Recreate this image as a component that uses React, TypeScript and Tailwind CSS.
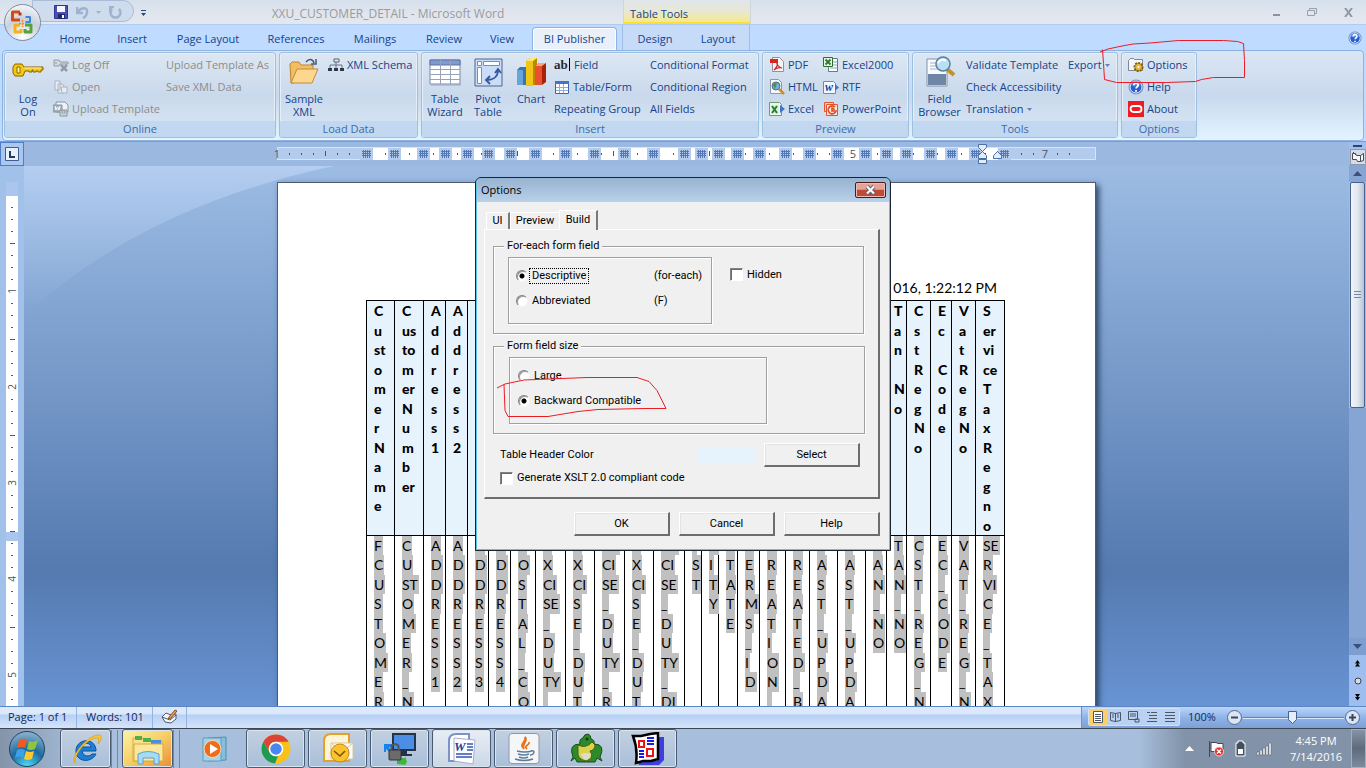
import type { ReactNode } from "react";

const tabs = [
  { name: "Home", width: "w-[58px]" },
  { name: "Insert", width: "w-14" },
  { name: "Page Layout", width: "w-24" },
  { name: "References", width: "w-20" },
  { name: "Mailings", width: "w-[78px]" },
  { name: "Review", width: "w-[60px]" },
  { name: "View", width: "w-14" },
];

// One entry per table column: header lines, then the selected form field lines.
const columns = [
  { width: 28, head: "C u st o m e r N a m e", body: "F C U S T O M E R" },
  { width: 29, head: "C us to m er N u m b er", body: "C U ST O M E R _ N" },
  { width: 22, head: "A d d r e s s 1", body: "A D D R E S S 1" },
  { width: 22, head: "A d d r e s s 2", body: "A D D R E S S 2" },
  { width: 21, head: "", body: "A D D R E S S 3" },
  { width: 22, head: "", body: "A D D R E S S 4" },
  { width: 25, head: "", body: "P O S T A L _ C O" },
  { width: 30, head: "", body: "E X CI SE _ D U TY ~" },
  { width: 29, head: "", body: "E X CI S E _ D U T" },
  { width: 30, head: "", body: "EX CI SE _ D U TY _ R" },
  { width: 29, head: "", body: "E X CI S E _ D U T" },
  { width: 31, head: "", body: "EX CI SE _ D U TY _ DI" },
  { width: 17, head: "", body: "~ S T" },
  { width: 17, head: "", body: "C I T Y" },
  { width: 19, head: "", body: "S T A T E" },
  { width: 22, head: "", body: "T E R M S _ I D" },
  { width: 26, head: "", body: "C R E A T I O N ~" },
  { width: 24, head: "", body: "C R E A T E D _ B" },
  { width: 28, head: "", body: "L A S T _ U P D A" },
  { width: 28, head: "", body: "L A S T _ U P D A" },
  { width: 21, head: "", body: "P A N _ N O" },
  { width: 20, head: "T a n ~ N o", body: "T A N _ N O" },
  { width: 24, head: "C s t R e g N o", body: "C S T _ R E G _ N" },
  { width: 21, head: "E c ~ C o d e", body: "E C _ C O D E" },
  { width: 24, head: "V a t R e g N o", body: "V A T _ R E G _ N" },
  { width: 29, head: "S er vi ce T a x R e g n o", body: "SE R VI C E _ T A X" },
];

const edges = columns.reduce((list, column) => [...list, list[list.length - 1] + column.width], [89]);

function lines(text: string) {
  return text ? text.split(" ").map((part) => (part === "~" ? "\u00a0" : part)) : [];
}

function HelpIcon({ size = 16 }: { size?: number }) {
  return (
    <svg width={size} height={size} viewBox="0 0 16 16">
      <circle cx="8" cy="8" r="7" fill="#2460cf" stroke="#7d93bb" />
      <circle cx="8" cy="8" r="6" fill="none" stroke="#e6f0ff" />
      <path d="M3 6a5 4 0 0 1 10 0q-5 3-10 0" fill="#6ea2f2" opacity=".6" />
      <path d="M5.8 6.3c.2-3 4.600-2.700 4.400 0 0 1.500-2.100 1.500-2.100 3.200M8 11v1.700" fill="none" stroke="#fff" strokeWidth="1.800" />
    </svg>
  );
}

function KeyIcon() {
  return (
    <svg width="32" height="32" viewBox="0 0 32 32">
      <path d="M3 8h7l2 3h19v3h-2v2h-3v-1h-2v1h-3v-2h-1v2h-3v-1h-4l-2 5H3l-2-3v-6z" fill="#f7c80c" stroke="#8a6400" />
      <path d="M5 11h3v6H5z" fill="#fff7c0" stroke="#8a6400" />
      <path d="M12 12h17" stroke="#fff2a0" />
    </svg>
  );
}

function FolderIcon() {
  return (
    <svg width="32" height="32" viewBox="0 0 32 32">
      <path d="M2 8l2-2h7l2 3h12v4L6 27H3z" fill="#f3bd62" stroke="#bf8534" />
      <path d="M9 13h21l-6 14H3z" fill="#fcd78d" stroke="#c38b3b" />
      <path d="M18 6c3-4 7-3 8 1M28 3v5h-5" fill="none" stroke="#475a72" strokeWidth="1.500" />
    </svg>
  );
}

function TableIcon() {
  return (
    <svg width="32" height="32" viewBox="0 0 32 32">
      <path d="M1 4h30v24H1z" fill="#fff" stroke="#7886a5" />
      <path d="M1 4h30v5H1z" fill="#7f9ad0" stroke="#5c74ab" />
      <path d="M1 13.500h30M1 18.500h30M1 23.500h30M11.500 4v24M21.500 4v24" stroke="#98a3ba" />
      <path d="M2 29h30" stroke="#9ba9c2" />
    </svg>
  );
}

function PivotIcon() {
  return (
    <svg width="32" height="32" viewBox="0 0 32 32">
      <path d="M3 3h27v27H3z" fill="#c9dcf8" stroke="#51658f" />
      <path d="M5.500 5.500h4v4h-4zM11.500 5.500h16v4h-16zM5.500 11.500h4v16h-4z" fill="#fff" stroke="#7b8dad" />
      <path d="M15 24c6 0 11-3 11-10M23 17l3-4 3 4M18 20l-4 4 4 4" fill="none" stroke="#38589c" strokeWidth="1.800" />
    </svg>
  );
}

function ChartIcon() {
  return (
    <svg width="32" height="32" viewBox="0 0 32 32">
      <path d="M2 14l3-3h7v18H2z" fill="#3576b5" />
      <path d="M2 14h6v15H2z" fill="#68a4d8" />
      <path d="M11 5l4-3h7v27H11z" fill="#b98a00" />
      <path d="M11 5h7v25h-7z" fill="#f2c413" />
      <path d="M11 5l4-3h7l-4 3z" fill="#ffe870" />
      <path d="M20 10l4-3h7v19l-4 3h-7z" fill="#a82205" />
      <path d="M20 10h7v19h-7z" fill="#ea5030" />
      <path d="M20 10l4-3h7l-4 3z" fill="#ffa182" />
    </svg>
  );
}

function BrowserIcon() {
  return (
    <svg width="32" height="32" viewBox="0 0 32 32">
      <path d="M3 3h20v27H3z" fill="#f8fafd" stroke="#8290a6" />
      <path d="M4 18h18v11H4z" fill="#6f87a6" />
      <path d="M6 7h7M6 10h6M6 13h7" stroke="#a5b2c4" />
      <path d="M23 13l7 6" stroke="#c79022" strokeWidth="4" />
      <circle cx="19" cy="8" r="7" fill="#b8e0f4" stroke="#5c7e9e" strokeWidth="1.500" />
      <path d="M14 7c2-4 6-4 8-2" fill="none" stroke="#fff" strokeWidth="2" />
    </svg>
  );
}

function LogOffIcon() {
  return (
    <svg width="16" height="16" viewBox="0 0 16 16" fill="none" stroke="#929aa5">
      <path d="M1 3h5l1 2h8v2H7L6 9H1zM3 5v2" fill="#d5dae1" />
      <path d="M8 8l6 6M14 8l-6 6" strokeWidth="2.500" />
    </svg>
  );
}

function OpenIcon() {
  return (
    <svg width="16" height="16" viewBox="0 0 16 16" fill="#e8edf4" stroke="#a8b2c0">
      <path d="M2 2h5v9H2zM5 5h4l2 2v7H5z" />
      <path d="M8 8h6v6H9z" />
    </svg>
  );
}

function UploadIcon() {
  return (
    <svg width="16" height="16" viewBox="0 0 16 16" stroke="#8b95a2">
      <path d="M3 1h9l3 3v7H3z" fill="#eef1f6" />
      <path d="M0 4h9v7H0z" fill="#a7b0bd" />
      <path d="M2 5l1 4 1.500-3L6 9l1-4" fill="none" stroke="#fff" />
      <path d="M7 9h7v6H7z" fill="#cdd3db" />
      <path d="M9 10h3v2H9z" fill="#fff" />
    </svg>
  );
}

function SchemaIcon() {
  return (
    <svg width="16" height="16" viewBox="0 0 16 16">
      <path d="M8 5v3M2 11V8h12v3M8 8v3" fill="none" stroke="#6b7686" />
      <path d="M6 2h5v3H6z" fill="#e7ebf2" stroke="#59616e" />
      <path d="M0 11h4v3H0zM6 11h4v3H6zM12 11h4v3h-4z" fill="#2f3947" />
    </svg>
  );
}

function FieldIcon() {
  return (
    <svg width="17" height="16" viewBox="0 0 17 16">
      <text x="0" y="12" fontFamily="Liberation Serif, serif" fontWeight="bold" fontSize="13" fill="#2a2a2a">ab</text>
      <path d="M15.500 1v13" stroke="#000" />
    </svg>
  );
}

function SmallTableIcon() {
  return (
    <svg width="16" height="16" viewBox="0 0 16 16">
      <path d="M1.500 2.500h13v12h-13z" fill="#fff" stroke="#3a66b5" />
      <path d="M1 2h14v3H1z" fill="#3f73cc" />
      <path d="M2 8.500h12M2 11.500h12M5.500 5v9M9.500 5v9" stroke="#94abd6" />
    </svg>
  );
}

function PdfIcon() {
  return (
    <svg width="16" height="16" viewBox="0 0 16 16">
      <path d="M3.500.500h7l4 4v10h-11z" fill="#f5f5f7" stroke="#8f9299" />
      <path d="M1 2h8v4H1z" fill="#d8271c" />
      <path d="M5 13c3-3 4-6 3-7-1 1 3 5 5 5-2-1-6 0-8 2" fill="none" stroke="#cf2a1f" strokeWidth="1.200" />
    </svg>
  );
}

function HtmlIcon() {
  return (
    <svg width="16" height="16" viewBox="0 0 16 16">
      <path d="M1.500.500h8l3 3v11h-11z" fill="#f7f9fc" stroke="#8c97a8" />
      <circle cx="7" cy="7" r="4" fill="#6fb0df" stroke="#5c6c80" />
      <path d="M4 6q2-3 4-2l-1 3-1 3z" fill="#3d9a43" />
      <path d="M10 10l5 5" stroke="#d08a2b" strokeWidth="2.500" />
    </svg>
  );
}

function ExcelIcon() {
  return (
    <svg width="16" height="16" viewBox="0 0 16 16">
      <path d="M.5 1.500h10l2 2v11H.500z" fill="#eef7ee" stroke="#6f9b75" />
      <path d="M2 4h8v9H2z" fill="#dff0de" />
      <path d="M3 5l5 7M8 5l-5 7" stroke="#22812a" strokeWidth="2" />
      <path d="M11 4l5 4-5 4z" fill="#3f76c9" />
    </svg>
  );
}

function Excel2000Icon() {
  return (
    <svg width="16" height="16" viewBox="0 0 16 16">
      <path d="M5.500 1.500h9v13h-9z" fill="#fff" stroke="#667a8e" />
      <path d="M10 5h4M10 8h4M7 11h7" stroke="#87a3c8" />
      <path d="M.5.500h9v9h-9z" fill="#e4f4e3" stroke="#2a6f2c" />
      <path d="M2.500 2.500l5 5M7.500 2.500l-5 5" stroke="#267a29" strokeWidth="1.800" />
    </svg>
  );
}

function RtfIcon() {
  return (
    <svg width="16" height="16" viewBox="0 0 16 16">
      <path d="M.5 2.500h10l2 2v10H.500z" fill="#f3f7fe" stroke="#6f88b5" />
      <text x="2" y="12" fontFamily="Liberation Serif, serif" fontWeight="bold" fontStyle="italic" fontSize="12" fill="#1d459a">w</text>
      <path d="M12 5l4 3.500-4 3.500z" fill="#3f76c9" />
    </svg>
  );
}

function PowerPointIcon() {
  return (
    <svg width="16" height="16" viewBox="0 0 16 16">
      <path d="M1.500 1.500h9v2M1.500 1.500v9h2" fill="none" stroke="#e2562d" />
      <path d="M3.500 3.500h11v11h-11z" fill="#fbe4dc" stroke="#e2562d" />
      <path d="M12 6a4 4 0 1 0 1 4H9V7a2 2 0 0 1 2 2" fill="none" stroke="#e04e22" strokeWidth="1.600" />
    </svg>
  );
}

function OptionsIcon() {
  return (
    <svg width="16" height="16" viewBox="0 0 16 16">
      <path d="M.5 3.500l2-2h3l1 1h8v11H.500z" fill="#f4f6fa" stroke="#7d8695" />
      <circle cx="10.500" cy="10" r="4" fill="#d2a423" stroke="#7e5e0d" strokeDasharray="2 1" strokeWidth="2" />
      <circle cx="10.500" cy="10" r="3" fill="#e2b93c" />
      <circle cx="10.500" cy="10" r="1" fill="#fff" />
    </svg>
  );
}

function OracleIcon() {
  return (
    <svg width="16" height="16" viewBox="0 0 16 16">
      <path d="M0 0h16v16H0z" fill="#ed1c24" />
      <rect x="2.500" y="5" width="11" height="6" rx="3" fill="none" stroke="#fff" strokeWidth="1.800" />
    </svg>
  );
}

function Caret() {
  return (
    <svg width="5" height="3" viewBox="0 0 5 3">
      <path d="M0 0h5L2.500 3z" fill="#5c84bd" />
    </svg>
  );
}

function Group({ title, width, children }: { title: string; width: string; children: ReactNode }) {
  return (
    <section className={`${width} flex shrink-0 flex-col overflow-hidden rounded-[3px] border border-[#9dbfe0] bg-linear-to-b from-[#dde7f3] via-[#c9d9ec] to-[#d9e8f6] shadow-[inset_0_0_0_1px_#e6eff8]`}>
      <div className="flex min-h-0 flex-1 items-start pt-px">{children}</div>
      <h2 className="h-4 shrink-0 bg-[#c1d8f0] text-center leading-4 text-[#3e6aaa]">{title}</h2>
    </section>
  );
}

function BigButton({ icon, width, label }: { icon: ReactNode; width: string; label: string[] }) {
  return (
    <button type="button" className={`${width} flex shrink-0 flex-col items-center pt-0.5`}>
      {icon}
      <span className="mt-1 text-center leading-[13px] whitespace-nowrap">
        {label.map((line) => (
          <span key={line} className="block">{line}</span>
        ))}
      </span>
    </button>
  );
}

function Small({ icon, disabled, caret, children }: { icon?: ReactNode; disabled?: boolean; caret?: boolean; children: ReactNode }) {
  return (
    <button type="button" disabled={disabled} className="flex h-[22px] items-center gap-[3px] whitespace-nowrap disabled:text-[#8d8d8d]">
      {icon}
      <span>{children}</span>
      {caret && <Caret />}
    </button>
  );
}

function TitleBar() {
  return (
    <header className="flex h-[25px] shrink-0 border-b border-[#b0cbef] bg-linear-to-b from-[#d6e0ec] via-[#dfe5ee] to-[#e4e8ee]">
      <div className="ml-8 flex h-[22px] w-[102px] items-center gap-2 rounded-r-full border border-[#a9bdd8] bg-[#cfdcee] pt-0.5 pl-[21px]">
        <button type="button" aria-label="Save">
          <svg width="14" height="14" viewBox="0 0 14 14">
            <path d="M.5.500h13v13H.500z" fill="#4a4fb5" stroke="#30348e" />
            <path d="M3 1h8v6H3z" fill="#f3f5ff" />
            <path d="M4 9h7v5H4z" fill="#23286e" />
            <path d="M8 10h2v3H8z" fill="#fff" />
          </svg>
        </button>
        <button type="button" aria-label="Undo" className="flex items-center gap-1">
          <svg width="16" height="13" viewBox="0 0 16 13">
            <path d="M1 1v6h6M2 6c3-5 10-5 9 0 0 3-2 5-4 6" fill="none" stroke="#9fb3d0" strokeWidth="2.500" />
          </svg>
          <svg width="5" height="3" viewBox="0 0 5 3"><path d="M0 0h5L2.500 3z" fill="#a2b1c9" /></svg>
        </button>
        <button type="button" aria-label="Repeat">
          <svg width="13" height="13" viewBox="0 0 13 13">
            <path d="M3 3a5 5 0 1 0 7 0M5 1H1v5" fill="none" stroke="#9fb3d0" strokeWidth="2.500" />
          </svg>
        </button>
      </div>
      <button type="button" aria-label="Customize Quick Access Toolbar" className="ml-[7px] h-[25px]">
        <svg width="5" height="6" viewBox="0 0 5 6"><path d="M0 0h5v1H0zM0 3h5L2.500 6z" fill="#27477c" /></svg>
      </button>
      <h1 className="ml-[7px] w-[470px] text-center text-xs leading-7 whitespace-nowrap text-[#9b9b9b]">XXU_CUSTOMER_DETAIL - Microsoft Word</h1>
      <div className="w-[128px] border-x border-b-2 border-x-[#cbd6dd] border-b-[#fddf33] bg-linear-to-b from-[#dfe5ec] via-[#e8e8d2] to-[#f5e88c] pl-1.5 leading-7 text-[#15428b]">Table Tools</div>
      <div className="ml-auto flex items-center gap-[27px] pr-[13px]">
        <button type="button" aria-label="Minimize">
          <svg width="8" height="10" viewBox="0 0 8 10"><path d="M1 8h7" stroke="#8a93a0" strokeWidth="2" /></svg>
        </button>
        <button type="button" aria-label="Restore">
          <svg width="10" height="9" viewBox="0 0 10 9"><path d="M2.500 2.500v-2h7v5h-2M.5 2.500h7v5h-7z" fill="none" stroke="#98a1ae" /></svg>
        </button>
        <button type="button" aria-label="Close">
          <svg width="9" height="9" viewBox="0 0 9 9"><path d="M1 0l7 9M8 0L1 9" stroke="#8f98a5" strokeWidth="2" /></svg>
        </button>
      </div>
    </header>
  );
}

function OfficeButton() {
  return (
    <button type="button" aria-label="Office Button" className="absolute top-[3px] left-[3px]">
      <svg width="39" height="39" viewBox="0 0 39 39">
        <defs>
          <radialGradient id="orb" cx=".5" cy=".9" r=".9">
            <stop offset="0" stopColor="#ffffff" />
            <stop offset=".55" stopColor="#c9d1de" />
            <stop offset="1" stopColor="#f4f7fb" />
          </radialGradient>
        </defs>
        <circle cx="19.500" cy="19.500" r="18" fill="url(#orb)" stroke="#7e8a9e" />
        <g fill="none" strokeWidth="3" strokeLinejoin="round">
          <path d="M17 9H9.500v8H17" stroke="#d9480f" />
          <path d="M17 9.500v3" stroke="#b93607" />
          <path d="M22.500 14H27v5h-4.500" stroke="#3f87d6" strokeWidth="2" />
          <path d="M17 22h-5v7h6v-3" stroke="#f2b31a" />
          <path d="M22 22h6v7h-6v-3" stroke="#57a337" />
        </g>
        <path d="M19.500 17v7M16 20.500h7" stroke="#f08a24" strokeWidth="1.500" strokeDasharray="2 1" />
      </svg>
    </button>
  );
}

function Ribbon() {
  return (
    <div className="shrink-0 bg-[#bfdbff] px-0.5 text-[#15428b]">
      <nav className="flex h-[25px] pl-11">
        {tabs.map((tab) => (
          <button key={tab.name} type="button" className={`${tab.width} pt-0.5 whitespace-nowrap`}>{tab.name}</button>
        ))}
        <button type="button" className="mt-0.5 ml-0.5 w-[85px] rounded-t-[4px] border border-b-0 border-[#8db2e3] bg-[#e9f0f9] whitespace-nowrap shadow-[inset_0_0_0_1px_#fff]">BI Publisher</button>
        <button type="button" className="ml-[5px] w-[65px] border-l border-[#a3bde0] bg-[#c6dbf8] pt-0.5">Design</button>
        <button type="button" className="w-[63px] border-r border-[#a3bde0] bg-[#c6dbf8] pt-0.5">Layout</button>
        <button type="button" aria-label="Help" className="mr-0.5 ml-auto"><HelpIcon size={14} /></button>
      </nav>
      <div className="flex h-[91px] gap-[3px] rounded-[4px] border border-[#8db2e3] bg-linear-to-b from-[#dbe6f4] via-[#c9d9ed] to-[#e3f4ff] px-px pt-px pb-0.5">
        <Group title="Online" width="w-[272px]">
          <BigButton icon={<KeyIcon />} width="w-[46px]" label={["Log", "On"]} />
          <div className="w-[115px] pl-0.5">
            <Small icon={<LogOffIcon />} disabled>Log Off</Small>
            <Small icon={<OpenIcon />} disabled>Open</Small>
            <Small icon={<UploadIcon />} disabled>Upload Template</Small>
          </div>
          <div>
            <Small disabled>Upload Template As</Small>
            <Small disabled>Save XML Data</Small>
          </div>
        </Group>
        <Group title="Load Data" width="w-[139px]">
          <BigButton icon={<FolderIcon />} width="w-12" label={["Sample", "XML"]} />
          <Small icon={<SchemaIcon />}>XML Schema</Small>
        </Group>
        <Group title="Insert" width="w-[338px]">
          <BigButton icon={<TableIcon />} width="w-[46px]" label={["Table", "Wizard"]} />
          <BigButton icon={<PivotIcon />} width="w-10" label={["Pivot", "Table"]} />
          <BigButton icon={<ChartIcon />} width="w-[46px]" label={["Chart"]} />
          <div className="w-24">
            <Small icon={<FieldIcon />}>Field</Small>
            <Small icon={<SmallTableIcon />}>Table/Form</Small>
            <Small>Repeating Group</Small>
          </div>
          <div>
            <Small>Conditional Format</Small>
            <Small>Conditional Region</Small>
            <Small>All Fields</Small>
          </div>
        </Group>
        <Group title="Preview" width="w-[147px]">
          <div className="w-[60px] pl-1.5">
            <Small icon={<PdfIcon />}>PDF</Small>
            <Small icon={<HtmlIcon />}>HTML</Small>
            <Small icon={<ExcelIcon />}>Excel</Small>
          </div>
          <div>
            <Small icon={<Excel2000Icon />}>Excel2000</Small>
            <Small icon={<RtfIcon />}>RTF</Small>
            <Small icon={<PowerPointIcon />}>PowerPoint</Small>
          </div>
        </Group>
        <Group title="Tools" width="w-[206px]">
          <BigButton icon={<BrowserIcon />} width="w-[53px]" label={["Field", "Browser"]} />
          <div className="w-[102px]">
            <Small>Validate Template</Small>
            <Small>Check Accessibility</Small>
            <Small caret>Translation</Small>
          </div>
          <Small caret>Export</Small>
        </Group>
        <div className="relative flex">
          <Group title="Options" width="w-[76px]">
            <div className="pl-1.5">
              <Small icon={<OptionsIcon />}>Options</Small>
              <Small icon={<HelpIcon />}>Help</Small>
              <Small icon={<OracleIcon />}>About</Small>
            </div>
          </Group>
          <svg className="pointer-events-none absolute -top-3 -left-[21px]" width="146" height="44" viewBox="0 0 146 44" fill="none" stroke="#ed1c24">
            <path d="M0 12l8-3 14-3 11-2 17-1L78.500.500h45l14 1 6 2 1 17v17h-31l-12 2-6 2-29 1h-50l-12-3-1-16-1-14" />
          </svg>
        </div>
      </div>
    </div>
  );
}

function Ruler() {
  const ticks = Array.from({ length: 67 }, (_, i) => i);
  // Only these inch marks stand clear of the column markers.
  const inches = [-1, 5, 7];
  return (
    <svg width="819" height="20" viewBox="0 0 819 20" className="shrink-0 overflow-visible">
      <path d="M.5 3.500h818v12H.500z" fill="#b3ccee" stroke="#d5e4f8" />
      <path d="M89 4h638v12H89z" fill="#fff" />
      {ticks.map((i) => {
        const x = i * 12;
        const inch = i / 8 - 1;
        if (i % 8 === 0) {
          return inches.includes(inch) ? (
            <text key={i} x={x} y="14" textAnchor="middle" fontSize="11" fill="#4d5562" fontFamily="Open Sans, sans-serif">
              {Math.abs(inch)}
            </text>
          ) : null;
        }
        return <path key={i} d={i % 4 === 0 ? `M${x + 0.5} 7v5` : `M${x + 0.5} 9v2`} stroke="#4d5562" />;
      })}
      {edges.map((x) => (
        <g key={x}>
          <path d={`M${x - 6} 4h13v12h-13z`} fill="#b3ccee" />
          <path d={`M${x - 2.5} 6v8M${x - 0.5} 6v8M${x + 1.5} 6v8M${x + 3.5} 6v8M${x - 4} 7.500h9M${x - 4} 9.500h9M${x - 4} 11.500h9`} stroke="#5577b3" />
        </g>
      ))}
      <g fill="#e3edfa" stroke="#4a6ea8">
        <path d="M701.500.500h8v3l-4 4-4-4zM701.500 14.500v-3l4-4 4 4v3zM701.500 15.500h8v4h-8zM716.500 14.500v-3l4-4 4 4v3z" />
      </g>
    </svg>
  );
}

function VerticalRuler() {
  return (
    <svg width="12" height="524" viewBox="0 0 12 524" className="mt-4">
      <path d="M0 0h12v524H0z" fill="#fff" />
      <path d="M0 0h12v14H0zM0 350h12v9H0z" fill="#aac6ee" />
      {Array.from({ length: 42 }, (_, i) => i + 1).map((i) => {
        const y = 13 + i * 12;
        if (i % 8 === 0) {
          return (
            <text key={i} transform={`translate(10 ${y}) rotate(-90)`} textAnchor="middle" fontSize="10" fill="#4d5562" fontFamily="Open Sans, sans-serif">
              {i / 8}
            </text>
          );
        }
        return <path key={i} d={i % 4 === 0 ? `M4 ${y + 0.5}h5` : `M5 ${y + 0.5}h2`} stroke="#4d5562" />;
      })}
    </svg>
  );
}

function FieldTable() {
  return (
    <table className="w-[639px] table-fixed border-collapse text-left">
      <colgroup>
        {columns.map((column, i) => (
          <col key={i} style={{ width: column.width }} />
        ))}
      </colgroup>
      <thead>
        <tr>
          {columns.map((column, i) => (
            <th key={i} className="border border-black bg-[#e6f3fd] p-0 pl-[7px] align-top font-black">
              <div className="grid h-[234px] grid-rows-12 leading-5 whitespace-nowrap">
                {lines(column.head).map((line, row) => (
                  <span key={row}>{line}</span>
                ))}
              </div>
            </th>
          ))}
        </tr>
      </thead>
      <tbody>
        <tr>
          {columns.map((column, i) => (
            <td key={i} className="border border-black p-0 pl-[7px] align-top">
              <div className="grid h-[175px] grid-rows-9 justify-items-start leading-5 whitespace-nowrap">
                {lines(column.body).map((line, row) => (
                  <span key={row} className="bg-[#c0c0c0] pr-px">{line}</span>
                ))}
              </div>
            </td>
          ))}
        </tr>
      </tbody>
    </table>
  );
}

function ScrollBar() {
  return (
    <aside className="flex w-[17px] shrink-0 flex-col items-center bg-[#9dbeee]">
      <div className="mt-[3px] h-0.5 w-[9px] bg-[#2e4468]" />
      <button type="button" aria-label="View Ruler" className="mt-0.5 flex size-4 items-center justify-center border border-[#8d99ab] bg-[#d6dce6]">
        <svg width="12" height="12" viewBox="0 0 12 12" fill="#f5f7fa" stroke="#424a57">
          <path d="M.5 2.500h3l1 2h4v6h-3l-1-2h-4zM8.500 4.500l3-2v7l-3 1M1 1l3 3" />
        </svg>
      </button>
      <button type="button" aria-label="Scroll up" className="flex h-[17px] w-full items-center justify-center bg-[#86a5d4]">
        <svg width="9" height="5" viewBox="0 0 9 5"><path d="M0 5h9L4.500 0z" fill="#3b4f77" /></svg>
      </button>
      <div className="h-[226px] w-[15px] rounded-[2px] border border-[#47618d] bg-linear-to-r from-[#f1f4f9] via-[#e2e8f1] to-[#b7c3d6]">
        <svg className="mx-auto mt-[108px]" width="7" height="8" viewBox="0 0 7 8"><path d="M0 .5h7M0 3.500h7M0 6.500h7" stroke="#7487a8" /></svg>
      </div>
      <div className="w-full flex-1 bg-[#86a5d4]" />
      <button type="button" aria-label="Scroll down" className="flex h-[17px] w-full items-center justify-center bg-[#7d9ed0]">
        <svg width="9" height="5" viewBox="0 0 9 5"><path d="M0 0h9L4.500 5z" fill="#3b4f77" /></svg>
      </button>
      <button type="button" aria-label="Previous page" className="flex h-[17px] items-center">
        <svg width="5" height="7" viewBox="0 0 5 7"><path d="M0 3.500L2.500 0 5 3.500zM0 6.500L2.500 3 5 6.500z" /></svg>
      </button>
      <button type="button" aria-label="Select browse object" className="flex h-[17px] items-center">
        <svg width="8" height="8" viewBox="0 0 8 8"><circle cx="4" cy="4" r="3" fill="#d7dbe0" stroke="#3c434d" /></svg>
      </button>
      <button type="button" aria-label="Next page" className="flex h-[17px] items-center">
        <svg width="5" height="7" viewBox="0 0 5 7"><path d="M0 0h5L2.500 3.500zM0 3h5L2.500 6.500z" /></svg>
      </button>
    </aside>
  );
}

function Workspace() {
  return (
    <div className="flex min-h-0 flex-1 overflow-hidden border-t border-[#7f9cc9]">
      <div className="flex w-6 shrink-0 flex-col items-center bg-[#a1c0ea]">
        <button type="button" aria-label="Tab selector" className="flex h-6 w-full shrink-0 items-center justify-center border border-[#4f7cc4] bg-[#a9c7ef]">
          <svg width="14" height="14" viewBox="0 0 14 14">
            <path d="M.5.500h13v13H.500z" fill="#e8f0fb" stroke="#3f5d95" />
            <path d="M5 4v6h5" fill="none" stroke="#233b66" strokeWidth="2" />
          </svg>
        </button>
        <VerticalRuler />
      </div>
      <div className="flex min-w-0 flex-1 flex-col">
        <div className="flex h-6 shrink-0 justify-center bg-[#9ab8e0] pt-0.5"><Ruler /></div>
        <main className="relative flex min-h-0 flex-1 justify-center overflow-hidden bg-linear-to-b from-[#9cbce4] from-0% via-[#557ab0] via-75% to-[#6894d3] pt-4">
          <svg className="absolute top-0 left-0" width="320" height="160" viewBox="0 0 320 160">
            <defs>
              <linearGradient id="glow" x1="0" y1="0" x2="0" y2="1">
                <stop offset="0" stopColor="#b4cdf0" />
                <stop offset="1" stopColor="#9cbce4" stopOpacity="0" />
              </linearGradient>
            </defs>
            <path d="M0 0h310Q120 40 0 150z" fill="url(#glow)" />
          </svg>
          <article className="relative h-[1056px] w-[819px] shrink-0 border border-[#4f5b6e] bg-white pt-[95px] pl-[88px] font-['Lato','Noto_Sans',sans-serif] text-sm text-black shadow-[3px_3px_6px_#2c4568]">
            <p className="mb-0.5 pr-[98px] text-right leading-5">016, 1:22:12 PM</p>
            <FieldTable />
          </article>
        </main>
      </div>
      <ScrollBar />
    </div>
  );
}

const radioClass =
  "size-3 appearance-none rounded-full border border-t-[#808080] border-r-[#f4f4f4] border-b-[#f4f4f4] border-l-[#808080] bg-white shadow-[inset_1px_1px_0_#9a9a9a] checked:bg-[radial-gradient(circle,#000_2px,#fff_3px)]";
const checkClass =
  "size-[13px] appearance-none border border-t-[#808080] border-r-[#fff] border-b-[#fff] border-l-[#808080] bg-white shadow-[inset_1px_1px_0_#6b6b6b]";
const buttonClass =
  "h-6 w-24 border-t border-r-2 border-b-2 border-l border-t-white border-r-[#6d6d6d] border-b-[#6d6d6d] border-l-white bg-[#f0f0f0] shadow-[inset_1px_1px_0_#e3e3e3]";
const etched = "border border-[#a0a0a0] shadow-[1px_1px_0_#fff,inset_1px_1px_0_#fff]";

function OptionsDialog() {
  return (
    <div role="dialog" aria-label="Options" className="relative h-[374px] w-[416px] rounded-t-[6px] border border-[#1b2430] bg-[#f0f0f0] font-['Roboto',sans-serif] text-[11px] leading-[14px] text-black shadow-[inset_0_0_0_1px_#5fc3e8]">
      <div className="mx-px flex h-6 items-center rounded-t-[5px] bg-linear-to-b from-[#97b3d0] to-[#b9d1ea] pr-[3px] pl-1">
        <h2 className="flex-1 font-['Open_Sans',sans-serif] text-[11px]">Options</h2>
        <button type="button" aria-label="Close" className="flex h-4 w-[31px] items-center justify-center rounded-[2px] border border-[#4d1a1a] bg-linear-to-b from-[#e3a499] from-45% to-[#c04a36] to-50% shadow-[inset_0_0_0_1px_#e9bcb3]">
          <svg width="11" height="10" viewBox="0 0 11 10">
            <path d="M2 1.500l7 7M9 1.500l-7 7" stroke="#5c5f6d" strokeWidth="4" />
            <path d="M2 1.500l7 7M9 1.500l-7 7" stroke="#fff" strokeWidth="2.200" />
          </svg>
        </button>
      </div>
      <div className="px-2 pt-[7px]">
        <div role="tablist" className="flex h-5 items-end pl-0.5">
          <button type="button" role="tab" className="h-[17px] w-6 border-t border-r-2 border-l border-t-white border-r-[#7a7a7a] border-l-white">UI</button>
          <button type="button" role="tab" className="h-[17px] w-[49px] border-t border-l border-white">Preview</button>
          <button type="button" role="tab" aria-selected="true" className="relative -mb-px h-5 w-[39px] border-t border-r-2 border-l border-t-white border-r-[#7a7a7a] border-l-white bg-[#f0f0f0] pb-0.5">Build</button>
        </div>
        <div className="h-[270px] w-[396px] border-t border-r-2 border-b-2 border-l border-t-white border-r-[#6d6d6d] border-b-[#6d6d6d] border-l-white px-2 pt-[9px]">
          <fieldset className={`${etched} h-[95px] w-[371px] pl-3.5`}>
            <legend className="-ml-1 bg-[#f0f0f0] px-[3px]">For-each form field</legend>
            <div className="flex pt-1">
              <div className={`${etched} h-[67px] w-[204px] space-y-[11px] py-[11px] pl-[7px]`}>
                <div className="flex items-center">
                  <label className="flex w-[138px] items-center gap-0.5">
                    <input type="radio" name="foreach" defaultChecked className={radioClass} />
                    <span className="px-0.5 outline outline-dotted outline-black">Descriptive</span>
                  </label>
                  <span>(for-each)</span>
                </div>
                <div className="flex items-center">
                  <label className="flex w-[138px] items-center gap-1">
                    <input type="radio" name="foreach" className={radioClass} />
                    Abbreviated
                  </label>
                  <span>(F)</span>
                </div>
              </div>
              <label className="ml-[18px] flex h-[35px] items-center gap-1">
                <input type="checkbox" className={checkClass} />
                Hidden
              </label>
            </div>
          </fieldset>
          <fieldset className={`${etched} mt-[5px] h-[95px] w-[372px] pl-[15px]`}>
            <legend className="-ml-[5px] bg-[#f0f0f0] px-[3px]">Form field size</legend>
            <div className="pt-1">
              <div className={`${etched} h-[67px] w-[258px] space-y-[11px] py-[11px] pl-2`}>
                <label className="flex items-center gap-1">
                  <input type="radio" name="size" className={radioClass} />
                  Large
                </label>
                <label className="flex items-center gap-1">
                  <input type="radio" name="size" defaultChecked className={radioClass} />
                  Backward Compatible
                </label>
              </div>
            </div>
          </fieldset>
          <div className="mt-[9px] flex items-center pl-[7px]">
            <span className="w-[198px]">Table Header Color</span>
            <span className="h-4 w-[58px] bg-[#e6f3fd]" />
            <button type="button" className={`${buttonClass} ml-2`}>Select</button>
          </div>
          <label className="mt-1 flex items-center gap-1 pl-[7px]">
            <input type="checkbox" className={checkClass} />
            Generate XSLT 2.0 compliant code
          </label>
        </div>
        <div className="mt-[13px] flex w-[396px] justify-end gap-[9px]">
          {["OK", "Cancel", "Help"].map((name) => (
            <button key={name} type="button" className={buttonClass}>{name}</button>
          ))}
        </div>
      </div>
      <svg className="pointer-events-none absolute top-[199px] left-[21px]" width="172" height="42" viewBox="0 0 172 42" fill="none" stroke="#ed1c24">
        <path d="M0 11l8-4 19-4 63-2.500h50l12 4 8 9 9 18h-22l-46 1-20 2-30 5H11l-3-6-1-26" />
      </svg>
    </div>
  );
}

function ViewButton({ d, label, active }: { d: string; label: string; active?: boolean }) {
  return (
    <button type="button" aria-label={label} className={active ? "h-4 w-[18px] bg-[#fbcf6d]" : "h-4 w-[18px] bg-[#b9d1f2]"}>
      <svg width="16" height="16" viewBox="0 0 16 16" className="mx-auto" fill={active ? "#fff" : "none"} stroke="#4c5666"><path d={d} /></svg>
    </button>
  );
}

function StatusBar() {
  return (
    <footer className="flex h-[22px] shrink-0 items-center border-t border-[#5c86c4] bg-linear-to-b from-[#dbe9fb] from-30% via-[#b7d1f5] via-40% to-[#d5e4f8] text-[#15285c]">
      <span className="flex h-full w-[77px] items-center border-r border-[#94b4e0] pb-0.5 pl-2">Page: 1 of 1</span>
      <span className="flex h-full w-[76px] items-center border-r border-[#94b4e0] pb-0.5 pl-[9px]">Words: 101</span>
      <span className="flex h-full w-[34px] items-center justify-center border-r border-[#94b4e0] pb-0.5">
        <svg width="17" height="16" viewBox="0 0 17 16">
          <path d="M1 8l4-4 5 2 5-1v5l-5 4-6-1z" fill="#f4f6fa" stroke="#4e5a72" />
          <path d="M1 8l8 3 6-5" fill="none" stroke="#4e5a72" />
          <path d="M8 8l6-7 2 1-6 7-3 1z" fill="#e0a35c" stroke="#874f2a" />
        </svg>
      </span>
      <div className="ml-auto flex h-full items-center border-l border-[#6c93cf] bg-linear-to-b from-[#bcd5f8] via-[#8fb4ea] to-[#7d9fd4] pr-[5px] pb-px pl-1.5">
        <div className="flex h-[18px] items-center rounded-[2px] border border-[#d2e1f6]">
          <ViewButton active d="M3.500 2.500h9v11h-9zM5 5.500h6M5 7.500h6M5 9.500h6M5 11.500h6" label="Print Layout" />
          <ViewButton d="M2.500 3.500l5 1 5-1v8l-5 1-5-1zM7.500 4v9M4 6h2M4 8h2M9 6h2M9 8h2" label="Full Screen Reading" />
          <ViewButton d="M2.500 2.500h9v8h-9zM4 5h6M4 7h6M9 10h4v3H9z" label="Web Layout" />
          <ViewButton d="M3 3.500h3M7 3.500h6M5 6.500h8M5 9.500h8M3 12.500h10" label="Outline" />
          <ViewButton d="M3 3.500h10M3 6.500h10M3 9.500h10M3 12.500h10" label="Draft" />
        </div>
        <span className="w-[46px] pl-2">100%</span>
        <button type="button" aria-label="Zoom out">
          <svg width="17" height="17" viewBox="0 0 17 17"><circle cx="8.500" cy="8.500" r="7" fill="#dce6f3" stroke="#4f6a93" /><path d="M5 8.500h7" stroke="#38475f" strokeWidth="2" /></svg>
        </button>
        <svg width="101" height="17" viewBox="0 0 101 17">
          <path d="M0 9.500h101" stroke="#dbe8fa" />
          <path d="M0 8.500h101" stroke="#5f82b8" />
          <path d="M45.500 2.500h8v8l-4 4-4-4z" fill="#e5edf8" stroke="#46628f" />
        </svg>
        <button type="button" aria-label="Zoom in">
          <svg width="17" height="17" viewBox="0 0 17 17"><circle cx="8.500" cy="8.500" r="7" fill="#dce6f3" stroke="#4f6a93" /><path d="M5 8.500h7M8.500 5v7" stroke="#38475f" strokeWidth="2" /></svg>
        </button>
      </div>
    </footer>
  );
}

function TaskButton({ label, width, tone, children }: { label: string; width: string; tone: string; children: ReactNode }) {
  return (
    <button type="button" aria-label={label} className={`${width} ${tone} flex h-[39px] shrink-0 items-center justify-center rounded-[3px] border border-[#4a5a70] shadow-[inset_0_0_0_1px_#dbe5f1]`}>
      <svg width="34" height="34" viewBox="0 0 34 34">{children}</svg>
    </button>
  );
}

const plain = "bg-linear-to-b from-[#c3d0e0] to-[#a9bfda]";

function Taskbar() {
  return (
    <div className="flex h-10 shrink-0 items-center border-t border-[#3b4757] bg-linear-to-r from-[#8494a9] via-[#a7bfdc] via-6% to-[#a7bfdc]">
      <button type="button" aria-label="Start" className="ml-2 w-[52px] shrink-0">
        <svg width="38" height="38" viewBox="0 0 38 38">
          <defs>
            <radialGradient id="start" cx=".5" cy="1" r="1">
              <stop offset="0" stopColor="#4fe0f5" />
              <stop offset=".5" stopColor="#1c6aa0" />
              <stop offset="1" stopColor="#8fb5cf" />
            </radialGradient>
          </defs>
          <circle cx="19" cy="19" r="17.500" fill="url(#start)" stroke="#21405f" />
          <path d="M11 10q4-3 8 0l-2 8q-4-2-8 0z" fill="#ee5a26" />
          <path d="M21 11q4 2 9-1l-3 9q-4 2-8 0z" fill="#8cc63e" />
          <path d="M9 20q4-2 8 0l-2 8q-4-3-8 0z" fill="#3fa0e8" />
          <path d="M18 21q4 2 8 0l-2 8q-5 2-8 0z" fill="#fdc92c" />
        </svg>
      </button>
      <TaskButton label="Internet Explorer" width="w-[51px]" tone={plain}>
        <path d="M27 19H13c1 6 8 6 10 3h4c-5 10-21 8-20-4C8 6 27 5 27 19zM13 15h9c-1-5-8-5-9 0z" fill="#1c7fd6" stroke="#0d4f96" />
        <path d="M6 31C0 25 20 1 31 3c3 2 0 7-2 9 1-4 1-7-2-6C18 7 5 22 6 31z" fill="#fbc62b" stroke="#c98c10" strokeWidth=".5" />
      </TaskButton>
      <div className="mr-1 h-[38px] w-[7px] border-x border-[#7488a2]" />
      <TaskButton label="Windows Explorer" width="w-[51px]" tone="bg-linear-to-br from-[#fbf3a5] via-[#f6cf66] to-[#e98b34]">
        <path d="M2 6h10l2 3h17v20H2z" fill="#f9e08a" stroke="#d6a93e" />
        <path d="M4 4h7v4H4zM12 6h8v4h-8z" fill="#4fae52" />
        <path d="M20 8h10v4H20z" fill="#4c8ed9" />
        <path d="M3 12h29v17H3z" fill="#fbe89e" stroke="#d6a93e" />
        <path d="M7 22q10-5 21 0v10h-5v-6H12v6H7z" fill="#a6dbf5" stroke="#5aa2d0" />
      </TaskButton>
      <div className="mr-[3px] h-[38px] w-[7px] border-x border-[#7488a2]" />
      <button type="button" aria-label="Media Player" className="flex w-[63px] shrink-0 justify-center">
        <svg width="30" height="30" viewBox="0 0 30 30">
          <path d="M8 4l18-1v23L8 27z" fill="#86bfda" stroke="#4f8fb5" />
          <path d="M3 4h18v23H3z" fill="#a5d3e8" stroke="#5c9cbf" />
          <circle cx="12.500" cy="15" r="8.500" fill="#ef6c1a" stroke="#fbd7b8" />
          <path d="M10 10l8 5-8 5z" fill="#fff" />
        </svg>
      </button>
      <div className="flex gap-[3px]">
        <TaskButton label="Chrome" width="w-[59px]" tone={plain}>
          <circle cx="17" cy="17" r="14.500" fill="#fbc116" />
          <path d="M4.400 9.800A14.500 14.500 0 0 1 29.600 9.800H17a7 7 0 0 0-6.300 10.500z" fill="#db4437" />
          <path d="M4.400 9.800l6.300 10.700A7 7 0 0 0 19 24l-3 7.500A14.500 14.500 0 0 1 4.400 9.800z" fill="#1c9b57" />
          <circle cx="17" cy="17" r="6.500" fill="#4a86ee" stroke="#fff" strokeWidth="1.500" />
        </TaskButton>
        <TaskButton label="Outlook" width="w-[59px]" tone={plain}>
          <path d="M3 9q0-7 7-7h18v27H3z" fill="#fff4d3" stroke="#e2a12b" strokeWidth="2" />
          <path d="M10 11h22v16H10z" fill="#fdfdfb" stroke="#d5c79c" />
          <path d="M10 11l11 9 11-9" fill="none" stroke="#d5c79c" />
          <circle cx="19" cy="21" r="9" fill="#fbc22c" stroke="#c98714" />
          <path d="M13 19l6 5 5-5" fill="none" stroke="#7b5310" strokeWidth="1.500" />
        </TaskButton>
        <TaskButton label="Remote session" width="w-[59px]" tone={plain}>
          <path d="M10 2h22v16H10z" fill="#4c8de6" stroke="#23344a" strokeWidth="2" />
          <path d="M18 19h6v3h5v2H15v-2h3z" fill="#27313f" />
          <path d="M1 12h8v3H6l4 5-3 1-4-4v3H1z" fill="#1583e8" />
          <path d="M14 26h8v-2l2 6-2 3-8-1z" fill="#3eb53d" />
          <rect x="6" y="18" width="12" height="10" rx="1" fill="#6b6b6b" stroke="#333" />
          <path d="M8.500 18v-4q3.500-4 7 0v4" fill="none" stroke="#555" strokeWidth="2" />
        </TaskButton>
        <TaskButton label="Microsoft Word" width="w-[59px]" tone="bg-linear-to-b from-[#e9eef5] to-[#cbd7e6]">
          <path d="M4 9q0-7 7-7h13v27H4z" fill="#fff" stroke="#7d93c6" strokeWidth="2" />
          <path d="M9 6l21 2-2 24-19-3z" fill="#fbfcff" stroke="#a4b0ca" />
          <text x="9" y="19" fontFamily="Liberation Serif, serif" fontWeight="bold" fontStyle="italic" fontSize="13" fill="#21439b">W</text>
          <path d="M22 12h6M22 15h6M22 18h6M11 22h16M11 25h16" stroke="#3554a8" strokeWidth="1.500" />
        </TaskButton>
        <TaskButton label="Java" width="w-[59px]" tone={plain}>
          <rect x="2" y="1.500" width="30" height="30" rx="3" fill="#f5f6f8" stroke="#8f98a5" />
          <path d="M17 17c-6-5 3-7 1-12 4 4-4 7-1 12M20 17c-4-4 3-3 2-7" fill="none" stroke="#e8731d" strokeWidth="1.800" />
          <path d="M10 19q8 2 15 0M11 22q6 2 11 0M12 25q5 2 9 0M24 19c5-1 3 4-1 4M8 27q9 3 18 0" fill="none" stroke="#5c7d99" strokeWidth="1.500" />
        </TaskButton>
        <TaskButton label="Toad" width="w-[59px]" tone={plain}>
          <path d="M2 29l2-4q-5-13 7-13-1-5 3-6 1-4 5-4 3 1 3 5 4 1 3 5 12 0 6 13l2 4-5-3-2 4H8l-2-4z" fill="#2d8a2a" stroke="#184d17" />
          <path d="M9 13q8 4 14-3l3 3q0 5-5 6 5 7-4 10-9-2-8-9z" fill="#d9d44c" stroke="#4c6116" />
          <circle cx="18" cy="7" r="1.500" fill="#0e3a10" />
          <path d="M12 22q5-2 10 0-1 5-5 6-4-2-5-6" fill="#dcdcd0" />
        </TaskButton>
        <TaskButton label="Report viewer" width="w-[59px]" tone={plain}>
          <path d="M27 5h6v23l-5 5H8l-1-4h19z" fill="#3d3de0" />
          <path d="M2 4l8 0 9-2 8-1v26l-7 2-8 0-7 2q2-14-3-27z" fill="#fff" stroke="#000" strokeWidth="2.500" />
          <path d="M8 9h5v6H8zM16 17h6v7h-6z" fill="none" stroke="#ec1313" strokeWidth="2" />
          <path d="M16 6h7M16 9h7M16 12h7M8 19h5M8 22h5M8 25h5" stroke="#1a1ae6" strokeWidth="2" />
        </TaskButton>
      </div>
      <div className="ml-auto flex h-full items-center bg-linear-to-r from-[#a7bfdc] to-[#8293a9] to-20% pl-[38px] text-white">
        <svg className="ml-2" width="9" height="5" viewBox="0 0 9 5"><path d="M0 5h9L4.500 0z" fill="#fff" /></svg>
        <svg className="ml-3.5" width="17" height="18" viewBox="0 0 17 18">
          <path d="M1.500 1v16M3 2.500h5l2 1h5v8H3z" fill="#fff" stroke="#3e4957" />
          <circle cx="11" cy="11.500" r="4.500" fill="#db2f27" stroke="#f3d4d2" />
          <path d="M9 9.500l4 4M13 9.500l-4 4" stroke="#fff" strokeWidth="1.500" />
        </svg>
        <svg className="ml-2.5" width="11" height="17" viewBox="0 0 11 17">
          <path d="M3 1h5v2h2v13H1V3h2z" fill="#41505f" stroke="#fff" />
          <path d="M3 9h5v5H3z" fill="#fff" />
        </svg>
        <svg className="ml-2.5" width="17" height="14" viewBox="0 0 17 14">
          <path d="M1 10h2v3H1zM4 8h2v5H4zM7 6h2v7H7zM10 4h2v9h-2zM13 1h2v12h-2z" fill="#fff" stroke="#4c5967" strokeWidth=".5" />
        </svg>
        <time className="ml-1 w-[74px] pl-1 text-center leading-4">
          <span className="block">4:45 PM</span>
          <span className="block">7/14/2016</span>
        </time>
        <button type="button" aria-label="Show desktop" className="h-full w-[15px] border border-[#9fb0c4] bg-linear-to-b from-[#8593a5] via-[#5d6b7d] to-[#7d8b9e]" />
      </div>
    </div>
  );
}

export default function App() {
  return (
    <div className="relative flex h-screen flex-col overflow-hidden font-['Open_Sans','Noto_Sans',sans-serif] text-[11px] leading-4">
      <TitleBar />
      <Ribbon />
      <Workspace />
      <StatusBar />
      <Taskbar />
      <OfficeButton />
      <div className="pointer-events-none absolute inset-x-0 top-[177px] flex justify-center">
        <div className="pointer-events-auto"><OptionsDialog /></div>
      </div>
    </div>
  );
}
